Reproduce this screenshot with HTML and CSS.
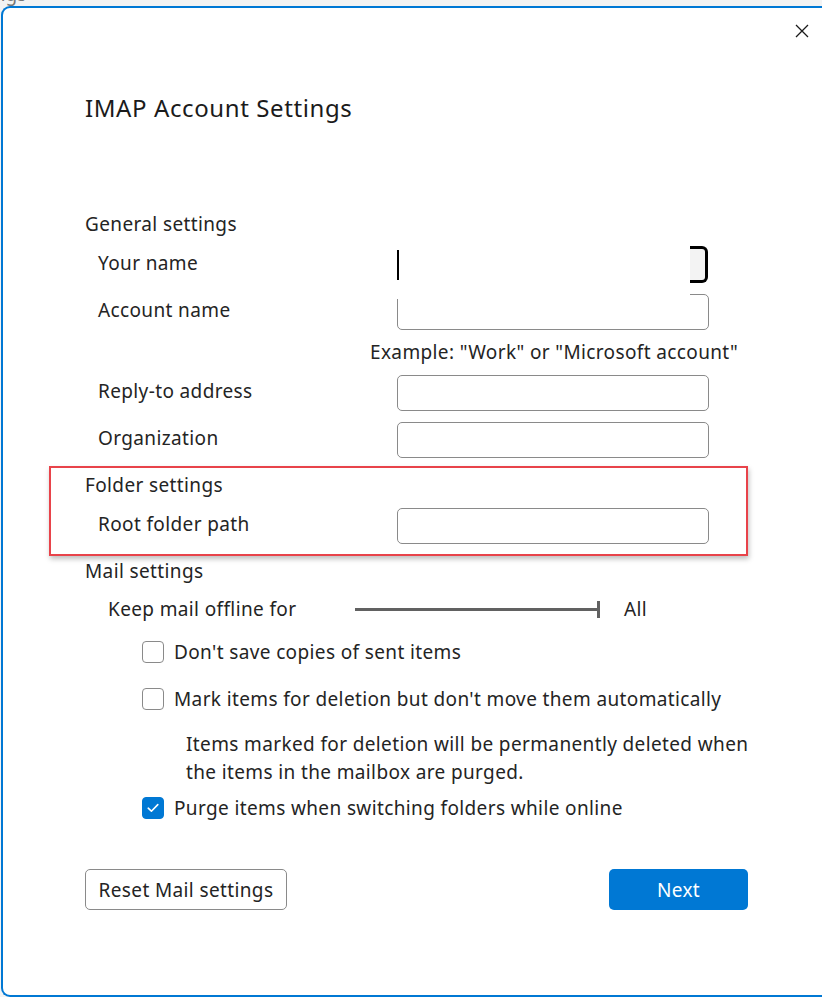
FILE: index.html
```html
<!DOCTYPE html>
<html lang="en">
<head>
<meta charset="utf-8">
<title>IMAP Account Settings</title>
<link rel="stylesheet" href="styles.css">
</head>
<body>
<div class="backdrop"><span class="backdrop-text">Settings</span></div>
<div class="dialog">
  <div class="dialog-top">
    <button class="close" aria-label="Close">
      <svg width="14" height="14" viewBox="0 0 14 14"><path d="M1 1 L13 13 M13 1 L1 13" stroke="#1a1a1a" stroke-width="1.3" fill="none"/></svg>
    </button>
  </div>
  <h1 class="title">IMAP Account Settings</h1>

  <div class="content">
    <div class="heading h-general">General settings</div>
    <div class="field-row r1">
      <span class="label first">Your name</span>
      <div class="input input-glitch"></div>
    </div>
    <div class="field-row r2">
      <span class="label">Account name</span>
      <div class="input input-covered"></div>
    </div>
    <div class="example">Example: "Work" or "Microsoft account"</div>
    <div class="field-row r3">
      <span class="label">Reply-to address</span>
      <div class="input"></div>
    </div>
    <div class="field-row r4">
      <span class="label">Organization</span>
      <div class="input"></div>
    </div>

    <div class="highlight">
      <div class="heading h-folder">Folder settings</div>
      <div class="field-row r5">
        <span class="label">Root folder path</span>
        <div class="input"></div>
      </div>
    </div>

    <div class="heading h-mail">Mail settings</div>
    <div class="offline-row">
      <span class="offline-label">Keep mail offline for</span>
      <div class="slider"><div class="slider-track"></div><div class="slider-end"></div></div>
      <span class="offline-value">All</span>
    </div>

    <div class="check-row c1">
      <span class="checkbox"></span>
      <span>Don't save copies of sent items</span>
    </div>
    <div class="check-row c2">
      <span class="checkbox"></span>
      <span>Mark items for deletion but don't move them automatically</span>
    </div>
    <p class="note">Items marked for deletion will be permanently deleted when<br>the items in the mailbox are purged.</p>
    <div class="check-row c3">
      <span class="checkbox checked">
        <svg width="12" height="10" viewBox="0 0 12 10"><path d="M1.2 5.2 L4.4 8.2 L10.8 1.6" stroke="#fff" stroke-width="1.6" fill="none" stroke-linecap="round" stroke-linejoin="round"/></svg>
      </span>
      <span>Purge items when switching folders while online</span>
    </div>

    <div class="buttons">
      <button class="btn btn-secondary">Reset Mail settings</button>
      <button class="btn btn-primary">Next</button>
    </div>
  </div>
</div>
</body>
</html>
```

FILE: styles.css
```css
html, body {
  margin: 0;
  padding: 0;
}
body {
  background: #f3f3f3;
  font-family: "Noto Sans", "Open Sans", "DejaVu Sans", sans-serif;
  color: #242424;
  font-size: 19px;
  letter-spacing: 0.37px;
  line-height: 24px;
  overflow: hidden;
  height: 997px;
}
.backdrop {
  height: 6px;
  overflow: hidden;
}
.backdrop-text {
  display: block;
  margin-top: -16px;
  margin-left: -46px;
  font-size: 19px;
  line-height: 20px;
  letter-spacing: 0;
  color: #777;
}
.dialog {
  margin-left: 1px;
  height: 991px;
  box-sizing: border-box;
  background: #fff;
  border: 2px solid #0078d4;
  border-right: none;
  border-radius: 9px 0 0 9px;
}
.dialog-top {
  display: flex;
  justify-content: flex-end;
  padding: 16px 13px 0 0;
}
.close {
  width: 14px;
  height: 14px;
  padding: 0;
  border: 0;
  background: transparent;
  display: block;
}
.close svg { display: block; }
.title {
  margin: 54px 0 0 82px;
  font-size: 24px;
  line-height: 32px;
  letter-spacing: 0.6px;
  font-weight: 400;
  color: #1b1b1b;
}
.content {
  padding-left: 82px;
}
.heading {
  line-height: 24px;
}
.h-general { margin-top: 88px; }
.field-row {
  display: grid;
  grid-template-columns: 299px 312px;
  align-items: center;
  padding-left: 13px;
}
.label {
  padding-bottom: 4px;
}
.label.first {
  padding-bottom: 0;
}
.input {
  height: 36px;
  box-sizing: border-box;
  border: 1.5px solid #8a8a8a;
  border-radius: 5px;
  background: #fff;
  position: relative;
}
.input-glitch {
  border: none;
  border-radius: 0;
}
.input-glitch::before {
  content: "";
  position: absolute;
  left: 0;
  top: 5px;
  width: 2px;
  height: 30px;
  background: #000;
}
.input-glitch::after {
  content: "";
  position: absolute;
  right: 1px;
  top: 1px;
  width: 18px;
  height: 37px;
  box-sizing: border-box;
  border: 3px solid #000;
  border-left: none;
  border-radius: 0 6px 6px 0;
  background: #f3f3f3;
}
.input-covered::before {
  content: "";
  position: absolute;
  left: -2px;
  top: -2px;
  width: 294px;
  height: 6px;
  background: #fff;
}
.r1 { margin-top: 9px; }
.r2 { margin-top: 13px; }
.example {
  margin-top: 10px;
  margin-left: 285px;
  line-height: 24px;
}
.r3 { margin-top: 11px; }
.r4 { margin-top: 11px; }
.highlight {
  margin-top: 8px;
  margin-left: -36px;
  width: 699px;
  box-sizing: border-box;
  border: 2px solid #e8434a;
  padding: 5px 0 10px 34px;
  box-shadow: 1px 3px 5px rgba(0, 0, 0, 0.25);
}
.highlight .field-row { margin-top: 11px; }
.h-mail { margin-top: 3px; }
.offline-row {
  display: flex;
  align-items: center;
  margin-top: 14px;
  padding-left: 23px;
  height: 24px;
}
.offline-label {
  width: 247px;
}
.slider {
  width: 245px;
  height: 17px;
  display: flex;
  align-items: center;
}
.slider-track {
  flex: 1;
  height: 3px;
  background: #616161;
}
.slider-end {
  width: 3px;
  height: 17px;
  background: #616161;
}
.offline-value {
  margin-left: 24px;
}
.check-row {
  display: flex;
  align-items: center;
  gap: 10px;
  padding-left: 57px;
  height: 24px;
}
.c1 { margin-top: 19px; }
.c2 { margin-top: 23px; }
.c3 { margin-top: 10px; }
.checkbox {
  width: 22px;
  height: 22px;
  box-sizing: border-box;
  border: 1.5px solid #8a8a8a;
  border-radius: 4px;
  background: #fff;
  display: flex;
  align-items: center;
  justify-content: center;
  flex: none;
}
.checkbox.checked {
  background: #0078d4;
  border-color: #0078d4;
}
.checkbox svg { display: block; }
.note {
  margin: 19px 0 0 101px;
  line-height: 28px;
}
.buttons {
  display: flex;
  justify-content: space-between;
  width: 663px;
  margin-top: 49px;
}
.btn {
  height: 41px;
  box-sizing: border-box;
  font-family: inherit;
  font-size: 19px;
  letter-spacing: 0.37px;
  border-radius: 5px;
  padding: 0;
  cursor: pointer;
}
.btn-secondary {
  width: 202px;
  background: #fff;
  color: #242424;
  border: 1.5px solid #8a8a8a;
}
.btn-primary {
  width: 139px;
  background: #0078d4;
  color: #fff;
  border: none;
}
```
